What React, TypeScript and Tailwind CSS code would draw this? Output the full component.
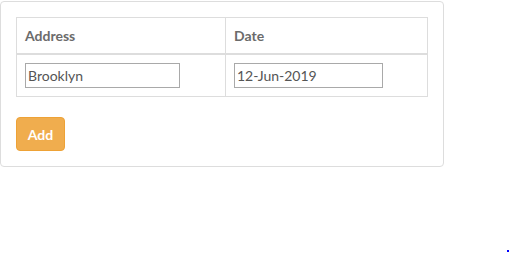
import React from "react";

export default function App() {
  return (
    <div className="relative w-[509px] h-[255px] bg-white overflow-hidden" style={{ fontFamily: "Lato, 'Open Sans', sans-serif" }}>
      <div className="mt-px w-[444px] border border-[#dddddd] rounded-[4px] px-[15px] pt-[15px] pb-[15px] bg-white">
        <table className="w-[412px] border-collapse border border-[#dddddd] text-[14px] mb-[20px]">
          <thead>
            <tr>
              <th className="w-[209px] text-left font-bold text-[#6b6b6b] px-2 pt-[8px] pb-[8px] leading-[19px] border-b-2 border-r border-[#dddddd]">
                Address
              </th>
              <th className="text-left font-bold text-[#6b6b6b] px-2 pt-[8px] pb-[8px] leading-[19px] border-b-2 border-[#dddddd]">
                Date
              </th>
            </tr>
          </thead>
          <tbody>
            <tr>
              <td className="px-2 pt-[8px] pb-[8px] border-r border-[#dddddd]">
                <input
                  defaultValue="Brooklyn"
                  className="block w-[155px] h-[25px] border border-[#a9a9a9] px-[2px] text-[14px] text-[#555555] outline-none"
                  style={{ fontFamily: "Lato, 'Open Sans', sans-serif" }}
                />
              </td>
              <td className="px-2 pt-[8px] pb-[8px]">
                <input
                  defaultValue="12-Jun-2019"
                  className="block w-[149px] h-[25px] border border-[#a9a9a9] px-[2px] text-[14px] text-[#555555] outline-none"
                  style={{ fontFamily: "Lato, 'Open Sans', sans-serif" }}
                />
              </td>
            </tr>
          </tbody>
        </table>
        <button className="block w-[49px] h-[34px] bg-[#f0ad4e] border border-[#eea236] rounded-[4px] text-white font-bold text-[14px]">
          Add
        </button>
      </div>
      <div className="absolute left-[507px] top-[250px] w-[2px] h-[2px] bg-[#0000ff]" />
    </div>
  );
}
